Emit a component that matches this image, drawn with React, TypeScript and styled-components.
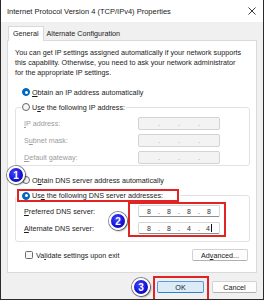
import React from "react";
import styled, { createGlobalStyle } from "styled-components";

const Global = createGlobalStyle`
  html, body { margin: 0; padding: 0; background: #ffffff; }
  body { font-family: "Liberation Sans", Arial, sans-serif; }
  * { box-sizing: border-box; }
`;

const Window = styled.div`
  position: relative;
  width: 264px;
  height: 300px;
  background: #f0f0f0;
  border: 1px solid #2b2b2b;
  border-top: none;
  overflow: hidden;
  display: flex;
  flex-direction: column;
  font-size: 7.2px;
  color: #1b1b1b;
`;

const TitleBar = styled.div`
  height: 22px;
  flex: none;
  background: #ffffff;
  display: flex;
  align-items: center;
  justify-content: space-between;
  padding: 0 7px 0 6px;
`;

const Title = styled.span`
  font-size: 7.5px;
  color: #1a1a1a;
  white-space: nowrap;
`;

const TabStrip = styled.div`
  height: 18px;
  flex: none;
  display: flex;
  align-items: flex-end;
  padding-left: 7px;
  position: relative;
  z-index: 1;
`;

const Tab = styled.div<{ $active?: boolean }>`
  height: ${(p) => (p.$active ? "15px" : "13px")};
  padding: ${(p) => (p.$active ? "0 4px" : "0 3px")};
  display: flex;
  align-items: center;
  white-space: nowrap;
  background: ${(p) => (p.$active ? "#ffffff" : "transparent")};
  border: ${(p) => (p.$active ? "1px solid #d9d9d9" : "none")};
  border-bottom: none;
  margin-bottom: ${(p) => (p.$active ? "-1px" : "0")};
  padding-bottom: ${(p) => (p.$active ? "2px" : "0")};
`;

const Panel = styled.div`
  margin: 0 6px;
  height: 233px;
  flex: none;
  background: #ffffff;
  border: 1px solid #dadada;
  padding: 7px 0 0 7px;
  display: flex;
  flex-direction: column;
`;

const Intro = styled.p`
  margin: 0;
  line-height: 10px;
  white-space: nowrap;
`;

const RadioRow = styled.label<{ $top?: number }>`
  display: flex;
  align-items: center;
  height: 10px;
  gap: 2px;
  margin-top: ${(p) => p.$top ?? 0}px;
  padding-left: 7px;
  white-space: nowrap;
`;

const RadioDot = styled.span<{ $on?: boolean }>`
  width: 8px;
  height: 8px;
  flex: none;
  border-radius: 50%;
  background: ${(p) => (p.$on ? "#0067c0" : "#f7f7f7")};
  border: 1px solid ${(p) => (p.$on ? "#0067c0" : "#666666")};
  display: flex;
  align-items: center;
  justify-content: center;
  &::after {
    content: "";
    display: ${(p) => (p.$on ? "block" : "none")};
    width: 3px;
    height: 3px;
    border-radius: 50%;
    background: #ffffff;
  }
`;

const Group = styled.fieldset<{ $top?: number; $bottom?: number }>`
  margin: ${(p) => p.$top ?? 0}px 0 0 0;
  width: 235px;
  border: 1px solid #e2e2e2;
  border-radius: 3px;
  padding: 0 0 ${(p) => p.$bottom ?? 1}px 0;
  min-width: 0;
`;

const Legend = styled.legend<{ $ml?: number }>`
  padding: 0 1px;
  margin-left: ${(p) => p.$ml ?? 5}px;
`;

const LegendRow = styled.span`
  display: flex;
  align-items: center;
  height: 10px;
  gap: 2px;
  white-space: nowrap;
`;

const RedBox = styled.div`
  border: 2px solid #e02424;
`;

const LegendRedBox = styled(RedBox)`
  width: 162px;
  height: 13px;
  display: flex;
  align-items: center;
  padding: 0 0 0 3px;
`;

const Rows = styled.div`
  display: flex;
  flex-direction: column;
  gap: 4px;
  padding: 5px 0 0 8px;
`;

const FieldRow = styled.div<{ $h?: number }>`
  display: flex;
  align-items: center;
  height: ${(p) => p.$h ?? 13}px;
`;

const Label = styled.span<{ $disabled?: boolean; $w?: number }>`
  width: ${(p) => p.$w ?? 114}px;
  flex: none;
  white-space: nowrap;
  color: ${(p) => (p.$disabled ? "#9b9b9b" : "#1b1b1b")};
`;

const Field = styled.div<{ $disabled?: boolean }>`
  width: 82px;
  height: ${(p) => (p.$disabled ? "13px" : "12px")};
  flex: none;
  display: flex;
  align-items: center;
  background: ${(p) => (p.$disabled ? "#f3f3f3" : "#ffffff")};
  border: 1px solid ${(p) => (p.$disabled ? "#d3d3d3" : "#d6d6d6")};
  border-bottom-color: ${(p) => (p.$disabled ? "#d3d3d3" : "#8d8d8d")};
  border-radius: 2px;
  color: ${(p) => (p.$disabled ? "#9a9a9a" : "#333333")};
`;

const Segment = styled.span`
  flex: 1;
  text-align: center;
  font-size: 7px;
`;

const Dot = styled.span`
  width: 0;
  display: flex;
  justify-content: center;
  white-space: nowrap;
`;

const Caret = styled.span`
  display: inline-block;
  width: 1px;
  height: 8px;
  background: #111111;
  margin-left: 1px;
  vertical-align: -1px;
`;

const DnsBody = styled.div`
  display: flex;
  padding-left: 8px;
`;

const DnsLabels = styled.div`
  display: flex;
  flex-direction: column;
  gap: 5px;
  padding-top: 3px;
`;

const DnsFields = styled(RedBox)`
  display: flex;
  flex-direction: column;
  gap: 5px;
  padding: 1px 4px 1px 8px;
`;

const BottomRow = styled.div`
  display: flex;
  align-items: center;
  justify-content: space-between;
  margin-top: 7px;
  padding-left: 10px;
  margin-right: 8px;
`;

const CheckRow = styled.label`
  display: flex;
  align-items: center;
  gap: 3px;
  white-space: nowrap;
`;

const CheckBox = styled.span`
  width: 8px;
  height: 8px;
  border: 1px solid #6a6a6a;
  border-radius: 1.5px;
  background: #f7f7f7;
`;

const Button = styled.button<{ $primary?: boolean; $w: number }>`
  width: ${(p) => p.$w}px;
  height: 12px;
  padding: 0;
  font-family: inherit;
  font-size: 7.2px;
  color: #1b1b1b;
  background: ${(p) => (p.$primary ? "#dcebf8" : "#fdfdfd")};
  border: 1px solid ${(p) => (p.$primary ? "#5a9ad8" : "#d2d2d2")};
  border-bottom-color: ${(p) => (p.$primary ? "#2f7fcf" : "#b0b0b0")};
  border-radius: 2px;
  display: flex;
  align-items: center;
  justify-content: center;
`;

const Footer = styled.div`
  display: flex;
  justify-content: flex-end;
  align-items: flex-start;
  padding: 3px 6px 0 0;
  gap: 3px;
`;

const OkBox = styled(RedBox)`
  height: 26px;
  padding: 3px 3px 0 2px;
`;

const Badge = styled.span<{ $x?: number; $y?: number; $flow?: boolean }>`
  position: ${(p) => (p.$flow ? "static" : "absolute")};
  left: ${(p) => p.$x ?? 0}px;
  top: ${(p) => p.$y ?? 0}px;
  width: 18px;
  height: 18px;
  flex: none;
  border-radius: 50%;
  border: 2px solid #ffffff;
  background: radial-gradient(circle at 40% 35%, #4646ff 0%, #1414d8 55%, #0a0a9a 100%);
  box-shadow: 0 0 0 1px rgba(40, 40, 60, 0.55), 1px 1px 2px rgba(0, 0, 0, 0.5);
  color: #ffffff;
  font-weight: bold;
  font-size: 10px;
  display: flex;
  align-items: center;
  justify-content: center;
  z-index: 2;
  margin-top: ${(p) => (p.$flow ? "2px" : "0")};
`;

type IpProps = { values?: string[]; disabled?: boolean; caret?: boolean };

const IpField: React.FC<IpProps> = ({ values = ["", "", "", ""], disabled, caret }) => (
  <Field $disabled={disabled}>
    {values.map((v, i) => (
      <React.Fragment key={i}>
        <Segment>
          {v}
          {caret && i === 3 ? <Caret /> : null}
        </Segment>
        {i < 3 ? <Dot>.</Dot> : null}
      </React.Fragment>
    ))}
  </Field>
);

const CloseIcon = () => (
  <svg width="8" height="8" viewBox="0 0 8 8">
    <path d="M0.5 0.5 L7.5 7.5 M7.5 0.5 L0.5 7.5" stroke="#222" strokeWidth="0.9" fill="none" />
  </svg>
);

export default function App() {
  return (
    <>
      <Global />
      <Window>
        <TitleBar>
          <Title>Internet Protocol Version 4 (TCP/IPv4) Properties</Title>
          <CloseIcon />
        </TitleBar>
        <TabStrip>
          <Tab $active>General</Tab>
          <Tab>Alternate Configuration</Tab>
        </TabStrip>
        <Panel>
          <Intro>
            You can get IP settings assigned automatically if your network supports
            <br />
            this capability. Otherwise, you need to ask your network administrator
            <br />
            for the appropriate IP settings.
          </Intro>
          <RadioRow $top={9}>
            <RadioDot $on />
            <span>
              <u>O</u>btain an IP address automatically
            </span>
          </RadioRow>
          <Group $top={5}>
            <Legend $ml={5}>
              <LegendRow>
                <RadioDot />
                <span>
                  U<u>s</u>e the following IP address:
                </span>
              </LegendRow>
            </Legend>
            <Rows>
              <FieldRow>
                <Label $disabled>
                  <u>I</u>P address:
                </Label>
                <IpField disabled />
              </FieldRow>
              <FieldRow>
                <Label $disabled>
                  S<u>u</u>bnet mask:
                </Label>
                <IpField disabled />
              </FieldRow>
              <FieldRow>
                <Label $disabled>
                  <u>D</u>efault gateway:
                </Label>
                <IpField disabled />
              </FieldRow>
            </Rows>
          </Group>
          <RadioRow $top={9}>
            <RadioDot />
            <span>
              O<u>b</u>tain DNS server address automatically
            </span>
          </RadioRow>
          <Group $top={4} $bottom={4}>
            <Legend $ml={0}>
              <LegendRedBox>
                <LegendRow>
                  <RadioDot $on />
                  <span>
                    Us<u>e</u> the following DNS server addresses:
                  </span>
                </LegendRow>
              </LegendRedBox>
            </Legend>
            <DnsBody>
              <DnsLabels>
                <FieldRow $h={12}>
                  <Label $w={104}>
                    <u>P</u>referred DNS server:
                  </Label>
                </FieldRow>
                <FieldRow $h={12}>
                  <Label $w={104}>
                    <u>A</u>lternate DNS server:
                  </Label>
                </FieldRow>
              </DnsLabels>
              <DnsFields>
                <IpField values={["8", "8", "8", "8"]} />
                <IpField values={["8", "8", "4", "4"]} caret />
              </DnsFields>
            </DnsBody>
          </Group>
          <BottomRow>
            <CheckRow>
              <CheckBox />
              <span>
                Va<u>l</u>idate settings upon exit
              </span>
            </CheckRow>
            <Button $w={56}>
              Ad<u>v</u>anced...
            </Button>
          </BottomRow>
        </Panel>
        <Footer>
          <Badge $flow>3</Badge>
          <OkBox>
            <Button $primary $w={47}>
              OK
            </Button>
          </OkBox>
          <Button $w={45} style={{ marginTop: 5 }}>
            Cancel
          </Button>
        </Footer>
        <Badge $x={6} $y={166}>
          1
        </Badge>
        <Badge $x={108} $y={212}>
          2
        </Badge>
      </Window>
    </>
  );
}
